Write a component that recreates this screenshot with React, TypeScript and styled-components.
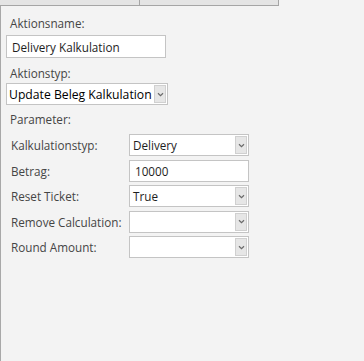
import React from 'react';
import styled, { createGlobalStyle } from 'styled-components';

const GlobalStyle = createGlobalStyle`
  html, body {
    margin: 0;
    padding: 0;
    background: #f3f3f3;
  }
  body {
    font-family: 'Open Sans', 'Liberation Sans', sans-serif;
    font-size: 11.7px;
  }
`;

const Window = styled.div`
  width: 364px;
  height: 361px;
  display: flex;
  flex-direction: column;
  background: #f3f3f3;
  overflow: hidden;
`;

const TabStrip = styled.div`
  display: flex;
  width: 279px;
  height: 6px;
  flex-shrink: 0;
`;

const Tab = styled.div`
  flex: 1;
  background: #e4e4e4;
  border-bottom: 1px solid #a5a5a5;
  border-right: 1px solid #a5a5a5;
`;

const Panel = styled.div`
  flex: 1;
  border-left: 1px solid #a8a8a8;
  padding: 7px 0 0 5px;
  display: flex;
  flex-direction: column;
`;

const FieldLabel = styled.div`
  height: 20px;
  line-height: 20px;
  padding-left: 4px;
  color: #454545;
`;

const Spacer = styled.div<{ $h: number }>`
  height: ${(p) => p.$h}px;
`;

const TextBox = styled.div<{ $w: number; $h?: number }>`
  box-sizing: border-box;
  width: ${(p) => p.$w}px;
  height: ${(p) => p.$h ?? 23}px;
  background: #fff;
  border: 1px solid #c4c4c4;
  padding: 0 5px;
  display: flex;
  align-items: center;
  color: #1e1e1e;
  white-space: nowrap;
  overflow: hidden;
`;

const Combo = styled.div<{ $w: number }>`
  box-sizing: border-box;
  width: ${(p) => p.$w}px;
  height: 22px;
  background: #fff;
  border: 1px solid #c4c4c4;
  display: flex;
  align-items: stretch;
`;

const ComboValue = styled.div<{ $strong?: boolean }>`
  flex: 1;
  display: flex;
  align-items: center;
  padding-left: ${(p) => (p.$strong ? 2 : 3)}px;
  color: ${(p) => (p.$strong ? '#000' : '#1e1e1e')};
  font-size: ${(p) => (p.$strong ? 12.2 : 11.7)}px;
  white-space: nowrap;
  overflow: hidden;
`;

const DropButton = styled.div`
  box-sizing: border-box;
  width: 12px;
  margin: 1px 1px 1px 0;
  background: #e6e6e6;
  border: 1px solid #d0d0d0;
  display: flex;
  align-items: center;
  justify-content: center;
`;

const ParamGrid = styled.div`
  display: grid;
  grid-template-columns: 118px 120px;
  grid-auto-rows: 22px;
  row-gap: 3.5px;
  padding-left: 5px;
`;

const ParamLabel = styled.div`
  display: flex;
  align-items: center;
  color: #454545;
  white-space: nowrap;
`;

const Chevron = () => (
  <svg width="7" height="5" viewBox="0 0 7 5">
    <path d="M1 1.2 L3.5 3.6 L6 1.2" fill="none" stroke="#6a6a6a" strokeWidth="1.2" />
  </svg>
);

const ComboBox: React.FC<{ value?: string; width: number; strong?: boolean }> = ({ value, width, strong }) => (
  <Combo $w={width}>
    <ComboValue $strong={strong}>{value}</ComboValue>
    <DropButton>
      <Chevron />
    </DropButton>
  </Combo>
);

const params: { label: string; kind: 'combo' | 'text'; value?: string }[] = [
  { label: 'Kalkulationstyp:', kind: 'combo', value: 'Delivery' },
  { label: 'Betrag:', kind: 'text', value: '10000' },
  { label: 'Reset Ticket:', kind: 'combo', value: 'True' },
  { label: 'Remove Calculation:', kind: 'combo' },
  { label: 'Round Amount:', kind: 'combo' },
];

const App: React.FC = () => {
  return (
    <>
      <GlobalStyle />
      <Window>
        <TabStrip>
          <Tab />
          <Tab />
        </TabStrip>
        <Panel>
          <FieldLabel>Aktionsname:</FieldLabel>
          <Spacer $h={2} />
          <TextBox $w={160}>Delivery Kalkulation</TextBox>
          <Spacer $h={5} />
          <FieldLabel>Aktionstyp:</FieldLabel>
          <ComboBox width={162} value="Update Beleg Kalkulation" strong />
          <Spacer $h={4} />
          <FieldLabel>Parameter:</FieldLabel>
          <Spacer $h={5} />
          <ParamGrid>
            {params.map((p) => (
              <React.Fragment key={p.label}>
                <ParamLabel>{p.label}</ParamLabel>
                {p.kind === 'combo' ? (
                  <ComboBox width={120} value={p.value} />
                ) : (
                  <TextBox $w={120} $h={22}>
                    {p.value}
                  </TextBox>
                )}
              </React.Fragment>
            ))}
          </ParamGrid>
        </Panel>
      </Window>
    </>
  );
};

export default App;
